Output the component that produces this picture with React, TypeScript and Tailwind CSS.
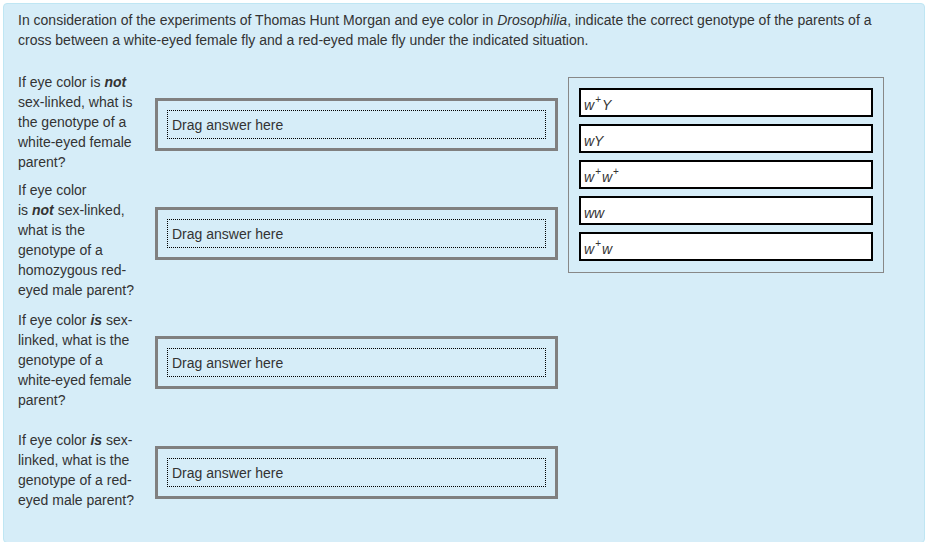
const FONT = { fontFamily: '"Liberation Sans", Arial, Helvetica, sans-serif' };

interface Question {
  lines: React.ReactNode[];
  boxTop: number;
  rowTop: number;
}

const questions: Question[] = [
  {
    rowTop: 0,
    boxTop: 26,
    lines: [
      <>If eye color is <b><i>not</i></b></>,
      "sex-linked, what is",
      "the genotype of a",
      "white-eyed female",
      "parent?"
    ]
  },
  {
    rowTop: 8,
    boxTop: 27,
    lines: [
      "If eye color",
      <>is <b><i>not</i></b> sex-linked,</>,
      "what is the",
      "genotype of a",
      "homozygous red-",
      "eyed male parent?"
    ]
  },
  {
    rowTop: 10,
    boxTop: 26,
    lines: [
      <>If eye color <b><i>is</i></b> sex-</>,
      "linked, what is the",
      "genotype of a",
      "white-eyed female",
      "parent?"
    ]
  },
  {
    rowTop: 20,
    boxTop: 16,
    lines: [
      <>If eye color <b><i>is</i></b> sex-</>,
      "linked, what is the",
      "genotype of a red-",
      "eyed male parent?"
    ]
  }
];

function Plus() {
  return <sup className="relative -top-[7px] mx-[1px] text-[10px] not-italic">+</sup>;
}

const answers: React.ReactNode[] = [
  <>w<Plus />Y</>,
  <>wY</>,
  <>w<Plus />w<Plus /></>,
  <>ww</>,
  <>w<Plus />w</>
];

function DropBox() {
  return (
    <div className="h-[53px] w-[403px] border-[3px] border-[#808080] px-[9px] py-[9px]">
      <div className="flex h-[29px] items-center border border-dotted border-black px-[4px] pt-[1px]">
        Drag answer here
      </div>
    </div>
  );
}

export default function App() {
  return (
    <div className="h-[542px] w-[928px] bg-white pl-[3px] pt-[3px]" style={FONT}>
      <div className="h-[540px] w-[922px] rounded-[4px] border border-[#bfe6f3] bg-[#d6edf8] text-[14px] leading-[20px] text-[#333]">
        <p className="whitespace-nowrap px-[14px] pt-[6px]">
          In consideration of the experiments of Thomas Hunt Morgan and eye color in <i>Drosophilia</i>, indicate the
          correct genotype of the parents of a
          <br />
          cross between a white-eyed female fly and a red-eyed male fly under the indicated situation.
        </p>
        <div className="mt-[22px] flex">
          <div className="flex flex-col pl-[14px]">
            {questions.map((q, i) => (
              <div key={i} className="flex" style={{ marginTop: q.rowTop }}>
                <div className="w-[123px] whitespace-nowrap">
                  {q.lines.map((line, j) => (
                    <div key={j}>{line}</div>
                  ))}
                </div>
                <div className="ml-[14px]" style={{ marginTop: q.boxTop }}>
                  <DropBox />
                </div>
              </div>
            ))}
          </div>
          <div className="ml-[10px] mt-[5px] h-[196px] w-[316px] border border-[#888] p-[10px]">
            <div className="flex flex-col gap-[7px]">
              {answers.map((a, i) => (
                <div key={i} className="flex h-[29px] items-center border-2 border-black bg-white px-[3px] pt-[5px] italic">
                  <span>{a}</span>
                </div>
              ))}
            </div>
          </div>
        </div>
      </div>
    </div>
  );
}
